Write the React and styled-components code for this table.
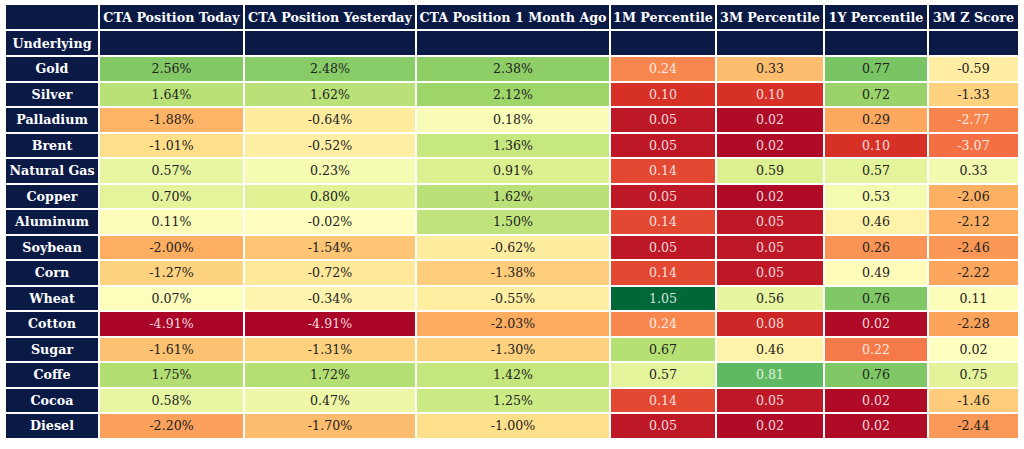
import React from "react";
import styled, { createGlobalStyle } from "styled-components";

const GlobalStyle = createGlobalStyle`
	body {
		margin: 0;
		background: #fff;
	}
`;

// matplotlib RdYlGn stops
const STOPS = [
	"#a50026", "#d73027", "#f46d43", "#fdae61", "#fee08b", "#ffffbf",
	"#d9ef8b", "#a6d96a", "#66bd63", "#1a9850", "#006837",
].map(h => [1, 3, 5].map(i => parseInt(h.slice(i, i + 2), 16)));

const rdYlGn = t => {
	const x = Math.min(1, Math.max(0, t)) * (STOPS.length - 1);
	const i = Math.min(STOPS.length - 2, Math.floor(x));
	const f = x - i;
	return STOPS[i].map((c, k) => Math.round(c + (STOPS[i + 1][k] - c) * f));
};

const luminance = rgb => {
	const [r, g, b] = rgb.map(c => {
		const v = c / 255;
		return v <= 0.03928 ? v / 12.92 : Math.pow((v + 0.055) / 1.055, 2.4);
	});
	return 0.2126 * r + 0.7152 * g + 0.0722 * b;
};

const columns = [
	{ title: "CTA Position Today", min: -5, max: 5, pct: true },
	{ title: "CTA Position Yesterday", min: -5, max: 5, pct: true },
	{ title: "CTA Position 1 Month Ago", min: -5, max: 5, pct: true },
	{ title: "1M Percentile", min: 0, max: 1 },
	{ title: "3M Percentile", min: 0, max: 1 },
	{ title: "1Y Percentile", min: 0, max: 1 },
	{ title: "3M Z Score", min: -5.2, max: 5.2 },
];

const rows = [
	["Gold", 2.56, 2.48, 2.38, 0.24, 0.33, 0.77, -0.59],
	["Silver", 1.64, 1.62, 2.12, 0.1, 0.1, 0.72, -1.33],
	["Palladium", -1.88, -0.64, 0.18, 0.05, 0.02, 0.29, -2.77],
	["Brent", -1.01, -0.52, 1.36, 0.05, 0.02, 0.1, -3.07],
	["Natural Gas", 0.57, 0.23, 0.91, 0.14, 0.59, 0.57, 0.33],
	["Copper", 0.7, 0.8, 1.62, 0.05, 0.02, 0.53, -2.06],
	["Aluminum", 0.11, -0.02, 1.5, 0.14, 0.05, 0.46, -2.12],
	["Soybean", -2.0, -1.54, -0.62, 0.05, 0.05, 0.26, -2.46],
	["Corn", -1.27, -0.72, -1.38, 0.14, 0.05, 0.49, -2.22],
	["Wheat", 0.07, -0.34, -0.55, 1.05, 0.56, 0.76, 0.11],
	["Cotton", -4.91, -4.91, -2.03, 0.24, 0.08, 0.02, -2.28],
	["Sugar", -1.61, -1.31, -1.3, 0.67, 0.46, 0.22, 0.02],
	["Coffe", 1.75, 1.72, 1.42, 0.57, 0.81, 0.76, 0.75],
	["Cocoa", 0.58, 0.47, 1.25, 0.14, 0.05, 0.02, -1.46],
	["Diesel", -2.2, -1.7, -1.0, 0.05, 0.02, 0.02, -2.44],
];

const Page = styled.div`
	padding: 5px 6px;
`;

const Grid = styled.div`
	display: grid;
	grid-template-columns: 92px 143px 170px 192px 104px 106px 102px 89px;
	grid-template-rows: 24px 24px;
	grid-auto-rows: 23.5px;
	gap: 2px;
	width: max-content;
	background: #fff;
	font-family: "DejaVu Serif", serif;
`;

const Head = styled.div`
	display: flex;
	align-items: center;
	justify-content: center;
	background: #0b1a45;
	color: #fff;
	font-weight: bold;
	font-size: 12.7px;
	white-space: nowrap;
`;

const Cell = styled.div`
	display: flex;
	align-items: center;
	justify-content: center;
	font-size: 12.6px;
	color: ${({ $light }) => ($light ? "rgba(255, 255, 255, 0.85)" : "#222")};
`;

const DataCell = ({ value, col }) => {
	const rgb = rdYlGn((value - col.min) / (col.max - col.min));
	return (
		<Cell
			$light={luminance(rgb) < 0.408}
			style={{ background: `rgb(${rgb.join(",")})` }}
		>
			{value.toFixed(2)}
			{col.pct ? "%" : ""}
		</Cell>
	);
};

export default function App() {
	return (
		<Page>
			<GlobalStyle />
			<Grid>
				<Head />
				{columns.map(c => (
					<Head key={c.title}>{c.title}</Head>
				))}
				<Head>Underlying</Head>
				{columns.map(c => (
					<Head key={c.title + "-blank"} />
				))}
				{rows.map(([name, ...values]) => (
					<React.Fragment key={name}>
						<Head>{name}</Head>
						{values.map((v, i) => (
							<DataCell key={i} value={v} col={columns[i]} />
						))}
					</React.Fragment>
				))}
			</Grid>
		</Page>
	);
}
